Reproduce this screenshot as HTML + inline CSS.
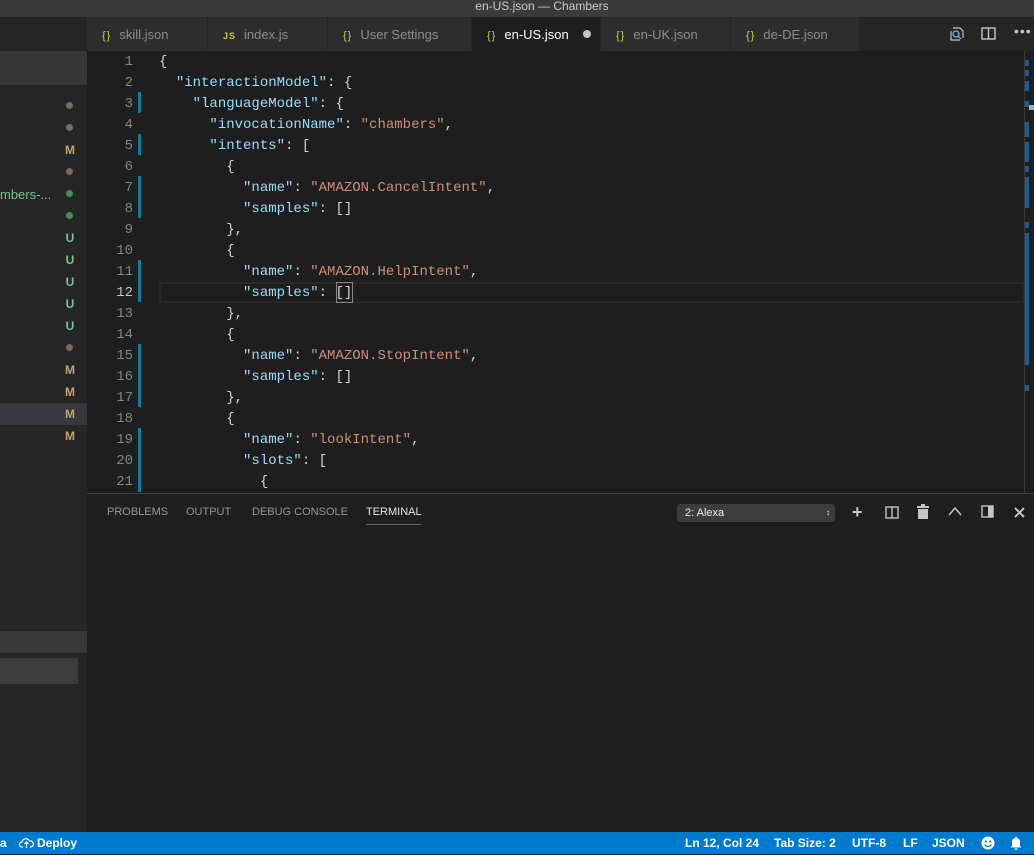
<!DOCTYPE html>
<html><head><meta charset="utf-8"><style>
*{margin:0;padding:0;box-sizing:border-box}
body{width:1034px;height:854px;overflow:hidden;background:#1e1e1e;font-family:"Liberation Sans",sans-serif;position:relative}
.abs{position:absolute}
#title{left:0;top:0;width:1034px;height:17px;background:#3a3a3a;color:#ccc;font-size:12px;text-align:center;line-height:12px;padding-left:50px}
#tabs{left:0;top:17px;width:1034px;height:34px;background:#252526}
.tab{position:absolute;top:0;height:34px;background:#2d2d2d;color:#8e8e8e;font-size:13px;line-height:35px;padding-left:15px;border-right:1px solid #252526}
.tab b{color:#cbcb41;font-weight:normal;font-size:11px;margin-right:8px;letter-spacing:1px}
.tab.act{background:#1e1e1e;color:#fff}
#side{left:0;top:51px;width:87px;height:781px;background:#252526}
.dec{position:absolute;left:64px;width:12px;text-align:center;font-size:12px;font-weight:bold;line-height:12px}
.dot{position:absolute;left:66px;width:7px;height:7px;border-radius:50%}
.code{position:absolute;left:87px;top:52px;font-family:"Liberation Mono",monospace;font-size:14px;line-height:21px;color:#d4d4d4;white-space:pre}
.ln{position:absolute;left:87px;width:46px;text-align:right;font-family:"Liberation Mono",monospace;font-size:14px;line-height:21px;color:#858585}
.k{color:#9cdcfe}.s{color:#ce9178}
.bar{position:absolute;left:138px;width:3px;background:#0c7d9d}
#panel{left:87px;top:493px;width:947px;height:339px;background:#1e1e1e;border-top:1px solid #414141}
.ph{position:absolute;top:12px;font-size:11px;color:#969696}
#status{left:0;top:832px;width:1034px;height:22px;background:#007acc;color:#fff;font-size:12px;line-height:23px;font-weight:bold}
.rm{position:absolute;left:1025px;width:4px;background:#1b5d96}
</style></head><body>
<div id="title" class="abs">en-US.json — Chambers</div>
<div id="tabs" class="abs">
<div class="tab" style="left:87px;width:121px"><b>{}</b>skill.json</div>
<div class="tab" style="left:208px;width:120px"><b style="font-size:9px;font-weight:bold">JS</b>index.js</div>
<div class="tab" style="left:328px;width:144px"><b>{}</b>User Settings</div>
<div class="tab act" style="left:472px;width:129px"><b>{}</b>en-US.json<span style="position:absolute;left:111px;top:13px;width:8px;height:8px;border-radius:50%;background:#c5c5c5"></span></div>
<div class="tab" style="left:601px;width:130px"><b>{}</b>en-UK.json</div>
<div class="tab" style="left:731px;width:129px"><b>{}</b>de-DE.json</div>
<svg class="abs" style="left:948px;top:8px" width="18" height="18" viewBox="0 0 18 18" fill="none" stroke="#c5c5c5" stroke-width="1.2"><path d="M5 3h7l3 3v7M3 6v9h9"/><circle cx="8" cy="9" r="3" stroke="#75beff"/><path d="M10 11l3 3" stroke="#75beff"/></svg>
<svg class="abs" style="left:981px;top:10px" width="15" height="13"><rect x="1" y="1" width="13" height="11" fill="none" stroke="#c5c5c5" stroke-width="1.4"/><path d="M7.5 1v11" stroke="#c5c5c5" stroke-width="1.4"/></svg>
<div class="abs" style="left:1014px;top:6px;color:#c5c5c5;font-size:14px;letter-spacing:1px">•••</div>
</div>
<div id="side" class="abs">
<div class="abs" style="left:0;top:0;width:87px;height:34px;background:#373737"></div>
<div class="dot" style="top:51px;background:#7e6b56"></div>
<div class="dot" style="top:73px;background:#7e6b56"></div>
<div class="dec" style="top:93px;color:#c5a56f">M</div>
<div class="dot" style="top:117px;background:#7e6b56"></div>
<div class="abs" style="left:0;top:136px;color:#73c991;font-size:13px">mbers-...</div>
<div class="dot" style="top:139px;background:#4b8a5c"></div>
<div class="dot" style="top:161px;background:#4b8a5c"></div>
<div class="dec" style="top:181px;color:#73c991">U</div>
<div class="dec" style="top:203px;color:#73c991">U</div>
<div class="dec" style="top:225px;color:#73c991">U</div>
<div class="dec" style="top:247px;color:#73c991">U</div>
<div class="dec" style="top:269px;color:#73c991">U</div>
<div class="dot" style="top:293px;background:#7e6b56"></div>
<div class="dec" style="top:313px;color:#c5a56f">M</div>
<div class="dec" style="top:335px;color:#c5a56f">M</div>
<div class="abs" style="left:0;top:352px;width:87px;height:22px;background:#37373d"></div>
<div class="dec" style="top:357px;color:#c5a56f">M</div>
<div class="dec" style="top:379px;color:#c5a56f">M</div>
<div class="abs" style="left:0;top:580px;width:87px;height:22px;background:#383838"></div>
<div class="abs" style="left:0;top:607px;width:78px;height:26px;background:#3c3c3c"></div>
</div>
<div class="abs" style="left:159px;top:282px;width:866px;height:21px;border:2px solid #282828"></div>
<div class="abs" style="left:336px;top:282px;width:17px;height:21px;border:1px solid #888"></div>
<div class="bar" style="top:92px;height:21px"></div>
<div class="bar" style="top:134px;height:21px"></div>
<div class="bar" style="top:176px;height:42px"></div>
<div class="bar" style="top:260px;height:42px"></div>
<div class="bar" style="top:344px;height:63px"></div>
<div class="bar" style="top:428px;height:64px"></div>
<div class="ln" style="top:52px">1<br>2<br>3<br>4<br>5<br>6<br>7<br>8<br>9<br>10<br>11<br><span style="color:#c6c6c6">12</span><br>13<br>14<br>15<br>16<br>17<br>18<br>19<br>20<br>21</div>
<div class="code" style="left:159px">{
  <span class="k">"interactionModel"</span>: {
    <span class="k">"languageModel"</span>: {
      <span class="k">"invocationName"</span>: <span class="s">"chambers"</span>,
      <span class="k">"intents"</span>: [
        {
          <span class="k">"name"</span>: <span class="s">"AMAZON.CancelIntent"</span>,
          <span class="k">"samples"</span>: []
        },
        {
          <span class="k">"name"</span>: <span class="s">"AMAZON.HelpIntent"</span>,
          <span class="k">"samples"</span>: []
        },
        {
          <span class="k">"name"</span>: <span class="s">"AMAZON.StopIntent"</span>,
          <span class="k">"samples"</span>: []
        },
        {
          <span class="k">"name"</span>: <span class="s">"lookIntent"</span>,
          <span class="k">"slots"</span>: [
            {</div>
<div class="abs" style="left:1024px;top:51px;width:1px;height:442px;background:#3a3a3a"></div>
<div class="rm" style="top:60px;height:6px"></div><div class="rm" style="top:70px;height:6px"></div><div class="rm" style="top:81px;height:10px"></div><div class="rm" style="top:101px;height:6px"></div>
<div class="abs" style="left:1029px;top:105px;width:5px;height:5px;background:#aaa"></div>
<div class="rm" style="top:122px;height:15px"></div><div class="rm" style="top:142px;height:20px"></div><div class="rm" style="top:166px;height:6px"></div><div class="rm" style="top:177px;height:31px"></div><div class="rm" style="top:222px;height:6px"></div><div class="rm" style="top:233px;height:132px"></div><div class="rm" style="top:385px;height:6px"></div>
<div id="panel" class="abs">
<div class="ph" style="left:20px">PROBLEMS</div>
<div class="ph" style="left:99px">OUTPUT</div>
<div class="ph" style="left:165px">DEBUG CONSOLE</div>
<div class="ph" style="left:279px;color:#e7e7e7">TERMINAL</div>
<div class="abs" style="left:279px;top:30px;width:55px;height:1px;background:#666"></div>
<div class="abs" style="left:590px;top:10px;width:158px;height:18px;background:#3c3c3c;border-radius:3px;color:#f0f0f0;font-size:11px;line-height:18px;padding-left:8px">2: Alexa<span style="position:absolute;right:5px;top:0;font-size:8px">&#8597;</span></div>
<div class="abs" style="left:765px;top:8px;color:#c5c5c5;font-size:18px;font-weight:bold">+</div>
<svg class="abs" style="left:798px;top:12px" width="14" height="13"><rect x="1" y="1" width="12" height="11" fill="none" stroke="#c5c5c5" stroke-width="1.4"/><path d="M7 1v11" stroke="#c5c5c5" stroke-width="1.4"/></svg>
<svg class="abs" style="left:830px;top:10px" width="12" height="15" fill="#c5c5c5"><rect x="0" y="2" width="12" height="2"/><rect x="4" y="0" width="4" height="2"/><rect x="1" y="5" width="10" height="10"/></svg>
<svg class="abs" style="left:861px;top:12px" width="14" height="10"><path d="M1 9l6-7 6 7" fill="none" stroke="#c5c5c5" stroke-width="1.5"/></svg>
<svg class="abs" style="left:894px;top:11px" width="13" height="13"><rect x="1" y="1" width="11" height="11" fill="none" stroke="#c5c5c5" stroke-width="1.4"/><rect x="7" y="1" width="5" height="11" fill="#c5c5c5"/></svg>
<svg class="abs" style="left:927px;top:13px" width="11" height="11"><path d="M1 1l9 9M10 1l-9 9" stroke="#c5c5c5" stroke-width="2"/></svg>
</div>
<div id="status" class="abs">
<span class="abs" style="left:0">a</span>
<svg class="abs" style="left:19px;top:5px" width="15" height="12" fill="none" stroke="#fff" stroke-width="1.2"><path d="M4 10H3a2.5 2.5 0 010-5 4 4 0 017.5-1A3 3 0 0112 10h-1M7.5 11V5M5.5 7l2-2 2 2"/></svg>
<span class="abs" style="left:37px">Deploy</span>
<span class="abs" style="left:685px">Ln 12, Col 24</span>
<span class="abs" style="left:774px">Tab Size: 2</span>
<span class="abs" style="left:852px">UTF-8</span>
<span class="abs" style="left:903px">LF</span>
<span class="abs" style="left:932px">JSON</span>
<svg class="abs" style="left:981px;top:4px" width="14" height="14"><circle cx="7" cy="7" r="6.5" fill="#fff"/><circle cx="4.8" cy="5.5" r="1.1" fill="#007acc"/><circle cx="9.2" cy="5.5" r="1.1" fill="#007acc"/><path d="M3.8 8.3a3.4 3.4 0 006.4 0" stroke="#007acc" stroke-width="1.3" fill="none"/></svg>
<svg class="abs" style="left:1010px;top:4px" width="12" height="14" fill="#fff"><path d="M6 1a1 1 0 011 1 4 4 0 013 4v4l1.5 1.5H.5L2 10V6a4 4 0 013-4 1 1 0 011-1zM4.5 12.5h3a1.5 1.5 0 01-3 0z"/></svg>
</div>
</body></html>
